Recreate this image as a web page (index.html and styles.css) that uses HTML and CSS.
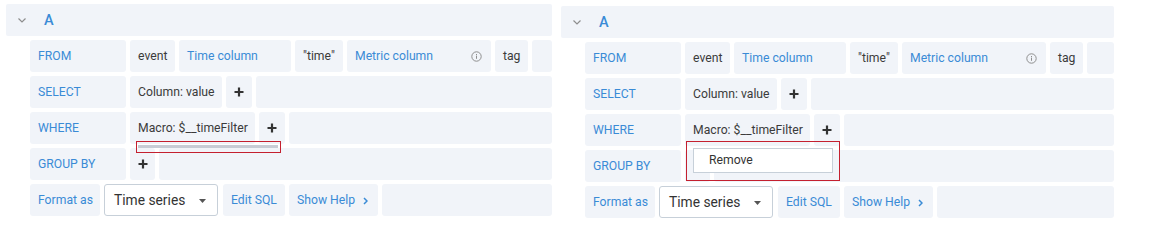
FILE: index.html
```html
<!DOCTYPE html>
<html lang="en">
<head>
    <meta charset="UTF-8">
    <meta name="viewport" content="width=device-width, initial-scale=1.0">
    <title>Query Editor</title>
    <link rel="stylesheet" href="styles.css">
</head>
<body>

    <div class="page">

        <!-- Left: remove menu collapsed -->
        <div class="panel panel-left">
            <div class="query-header">
                <svg class="chevron" width="8" height="5" viewBox="0 0 8 5"><path d="M0.5 0.5 L4 4 L7.5 0.5" fill="none" stroke="#8e8e8e" stroke-width="1.2"/></svg>
                <span class="ref-id">A</span>
            </div>
            <div class="rows">
                <div class="row">
                    <div class="cell label w-96">FROM</div>
                    <div class="cell w-45">event</div>
                    <div class="cell label w-112">Time column</div>
                    <div class="cell w-48">"time"</div>
                    <div class="cell label w-144 cell-info">Metric column
                        <svg class="info" width="11" height="11" viewBox="0 0 11 11"><circle cx="5.5" cy="5.5" r="4.7" fill="none" stroke="#8e8e8e" stroke-width="1"/><rect x="5" y="4.6" width="1" height="3.2" fill="#8e8e8e"/><rect x="5" y="3" width="1" height="1" fill="#8e8e8e"/></svg>
                    </div>
                    <div class="cell w-33">tag</div>
                    <div class="cell filler"></div>
                </div>
                <div class="row">
                    <div class="cell label w-96">SELECT</div>
                    <div class="cell w-92">Column: value</div>
                    <div class="cell plus w-26"><svg width="10" height="10" viewBox="0 0 10 10"><path d="M5 0.5 V9.5 M0.5 5 H9.5" stroke="#333" stroke-width="2.2"/></svg></div>
                    <div class="cell filler"></div>
                </div>
                <div class="row">
                    <div class="cell label w-96">WHERE</div>
                    <div class="cell w-125">Macro: $__timeFilter</div>
                    <div class="cell plus w-26"><svg width="10" height="10" viewBox="0 0 10 10"><path d="M5 0.5 V9.5 M0.5 5 H9.5" stroke="#333" stroke-width="2.2"/></svg></div>
                    <div class="cell filler"></div>
                </div>
                <div class="row">
                    <div class="cell label w-96">GROUP BY</div>
                    <div class="cell plus w-25"><svg width="10" height="10" viewBox="0 0 10 10"><path d="M5 0.5 V9.5 M0.5 5 H9.5" stroke="#333" stroke-width="2.2"/></svg></div>
                    <div class="cell filler"></div>
                </div>
                <div class="row">
                    <div class="cell label w-70">Format as</div>
                    <div class="select w-114">Time series
                        <svg class="caret" width="7" height="4" viewBox="0 0 7 4"><path d="M0 0 H7 L3.5 4 Z" fill="#555"/></svg>
                    </div>
                    <div class="cell label w-63 gap-1">Edit SQL</div>
                    <div class="cell label w-89">Show Help
                        <svg class="help-arrow" width="5" height="8" viewBox="0 0 5 8"><path d="M1 1 L4 4 L1 7" fill="none" stroke="#3a8bd6" stroke-width="1.5"/></svg>
                    </div>
                    <div class="cell filler"></div>
                </div>
            </div>
            <div class="outline outline-left">
                <div class="menu-collapsed"></div>
            </div>
        </div>

        <!-- Right: remove menu open -->
        <div class="panel panel-right">
            <div class="query-header">
                <svg class="chevron" width="8" height="5" viewBox="0 0 8 5"><path d="M0.5 0.5 L4 4 L7.5 0.5" fill="none" stroke="#8e8e8e" stroke-width="1.2"/></svg>
                <span class="ref-id">A</span>
            </div>
            <div class="rows">
                <div class="row">
                    <div class="cell label w-96">FROM</div>
                    <div class="cell w-45">event</div>
                    <div class="cell label w-112">Time column</div>
                    <div class="cell w-48">"time"</div>
                    <div class="cell label w-144 cell-info">Metric column
                        <svg class="info" width="11" height="11" viewBox="0 0 11 11"><circle cx="5.5" cy="5.5" r="4.7" fill="none" stroke="#8e8e8e" stroke-width="1"/><rect x="5" y="4.6" width="1" height="3.2" fill="#8e8e8e"/><rect x="5" y="3" width="1" height="1" fill="#8e8e8e"/></svg>
                    </div>
                    <div class="cell w-33">tag</div>
                    <div class="cell filler"></div>
                </div>
                <div class="row">
                    <div class="cell label w-96">SELECT</div>
                    <div class="cell w-92">Column: value</div>
                    <div class="cell plus w-26"><svg width="10" height="10" viewBox="0 0 10 10"><path d="M5 0.5 V9.5 M0.5 5 H9.5" stroke="#333" stroke-width="2.2"/></svg></div>
                    <div class="cell filler"></div>
                </div>
                <div class="row">
                    <div class="cell label w-96">WHERE</div>
                    <div class="cell w-125">Macro: $__timeFilter</div>
                    <div class="cell plus w-26"><svg width="10" height="10" viewBox="0 0 10 10"><path d="M5 0.5 V9.5 M0.5 5 H9.5" stroke="#333" stroke-width="2.2"/></svg></div>
                    <div class="cell filler"></div>
                </div>
                <div class="row">
                    <div class="cell label w-96">GROUP BY</div>
                    <div class="cell plus w-25"><svg width="10" height="10" viewBox="0 0 10 10"><path d="M5 0.5 V9.5 M0.5 5 H9.5" stroke="#333" stroke-width="2.2"/></svg></div>
                    <div class="cell filler"></div>
                </div>
                <div class="row">
                    <div class="cell label w-70">Format as</div>
                    <div class="select w-114">Time series
                        <svg class="caret" width="7" height="4" viewBox="0 0 7 4"><path d="M0 0 H7 L3.5 4 Z" fill="#555"/></svg>
                    </div>
                    <div class="cell label w-63 gap-1">Edit SQL</div>
                    <div class="cell label w-89">Show Help
                        <svg class="help-arrow" width="5" height="8" viewBox="0 0 5 8"><path d="M1 1 L4 4 L1 7" fill="none" stroke="#3a8bd6" stroke-width="1.5"/></svg>
                    </div>
                    <div class="cell filler"></div>
                </div>
            </div>
            <div class="outline outline-right">
                <div class="menu">Remove</div>
            </div>
        </div>

    </div>

</body>
</html>
```

FILE: styles.css
```css
body {
    margin: 0;
    background: #fff;
    font-family: Roboto, 'Liberation Sans', sans-serif;
    font-size: 12.2px;
    color: #3b3b3b;
}

.page {
    display: flex;
    align-items: flex-start;
}

.panel {
    position: relative;
}

.panel-left {
    width: 546px;
    margin: 4px 0 0 6px;
}

.panel-right {
    width: 553px;
    margin: 6px 0 0 9px;
}

.query-header {
    height: 32px;
    background: #f1f4f9;
    border-radius: 2px;
    display: flex;
    align-items: center;
    padding-left: 12px;
}

.chevron {
    margin-right: 18px;
    margin-top: 1px;
}

.ref-id {
    color: #3a8bd6;
    font-size: 14.5px;
    font-weight: 500;
}

.rows {
    display: flex;
    flex-direction: column;
    gap: 4px;
    margin-top: 4px;
    padding-left: 24px;
}

.row {
    display: flex;
    gap: 4px;
    height: 32px;
}

.cell {
    height: 32px;
    line-height: 32px;
    background: #f1f4f9;
    border-radius: 3px;
    padding: 0 8px;
    box-sizing: border-box;
    white-space: nowrap;
    flex-shrink: 0;
}

.label {
    color: #3a8bd6;
}

.filler {
    flex: 1;
    flex-shrink: 1;
    min-width: 0;
}

.plus {
    display: flex;
    align-items: center;
    justify-content: center;
    padding: 0;
}

.cell-info {
    display: flex;
    align-items: center;
    justify-content: space-between;
    padding-right: 9px;
}

.select {
    height: 32px;
    background: #fff;
    border: 1px solid #c7d0d9;
    border-radius: 3px;
    box-sizing: border-box;
    padding: 0 10px 0 9px;
    display: flex;
    align-items: center;
    justify-content: space-between;
    font-size: 13.8px;
    color: #333;
    flex-shrink: 0;
}

.caret {
    margin-right: 1px;
    margin-top: 1px;
}

.help-arrow {
    margin-left: 5px;
    vertical-align: -1px;
}

.gap-1 {
    margin-left: 1px;
}

.w-25 { width: 25px; }
.w-26 { width: 26px; }
.w-33 { width: 33px; }
.w-45 { width: 45px; }
.w-48 { width: 48px; }
.w-63 { width: 62px; }
.w-70 { width: 70px; }
.w-89 { width: 89px; }
.w-92 { width: 92px; }
.w-96 { width: 96px; }
.w-112 { width: 112px; }
.w-114 { width: 114px; }
.w-125 { width: 125px; }
.w-144 { width: 144px; }

/* highlight boxes drawn over the WHERE dropdown */
.outline {
    position: absolute;
    border: 1px solid #c4202f;
    box-sizing: border-box;
}

.outline-left {
    left: 130px;
    top: 137px;
    width: 145px;
    height: 12px;
    padding: 3px 2px 0 1px;
}

.menu-collapsed {
    height: 3px;
    background: #c7ccd5;
}

.outline-right {
    left: 125px;
    top: 135px;
    width: 154px;
    height: 40px;
    padding: 6px 6px 0 6px;
}

.menu {
    height: 25px;
    line-height: 23px;
    background: #fff;
    border: 1px solid #c7d0d9;
    box-sizing: border-box;
    padding-left: 15px;
    color: #333;
    font-size: 12.2px;
}
```
